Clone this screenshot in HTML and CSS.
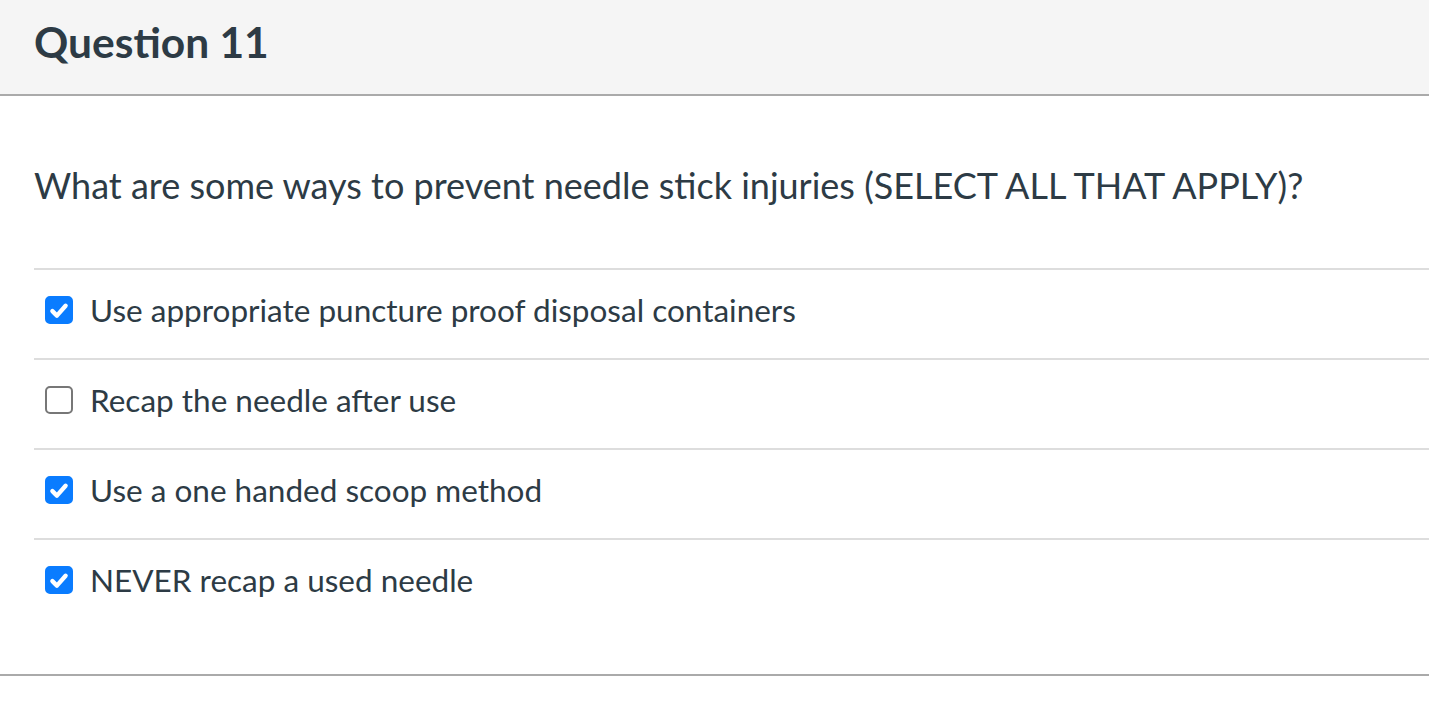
FILE: index.html
```html
<!DOCTYPE html>
<html lang="en">
<head>
  <meta charset="UTF-8" />
  <title>Question 11</title>
  <link rel="stylesheet" href="styles.css">
</head>
<body>
  <div class="question">
    <div class="question-header">
      <h2>Question 11</h2>
    </div>
    <div class="question-body">
      <p class="question-text">What are some ways to prevent needle stick injuries (SELECT ALL THAT APPLY)?</p>
      <div class="answers">
        <label class="answer">
          <span class="box checked"><svg viewBox="0 0 16 16"><path d="M3.6 8.4 L6.6 11.4 L12.4 4.8" /></svg></span>
          Use appropriate puncture proof disposal containers
        </label>
        <label class="answer">
          <span class="box"></span>
          Recap the needle after use
        </label>
        <label class="answer">
          <span class="box checked"><svg viewBox="0 0 16 16"><path d="M3.6 8.4 L6.6 11.4 L12.4 4.8" /></svg></span>
          Use a one handed scoop method
        </label>
        <label class="answer">
          <span class="box checked"><svg viewBox="0 0 16 16"><path d="M3.6 8.4 L6.6 11.4 L12.4 4.8" /></svg></span>
          NEVER recap a used needle
        </label>
      </div>
    </div>
  </div>
</body>
</html>
```

FILE: styles.css
```css
* {
  box-sizing: border-box;
}

body {
  margin: 0;
  background: #fff;
  font-family: Lato, "Open Sans", sans-serif;
  color: #2d3b45;
}

.question {
  border-bottom: 2px solid #aaa;
}

.question-header {
  background: #f5f5f5;
  border-bottom: 2px solid #aaa;
  height: 96px;
  padding: 0 34px;
  display: flex;
  align-items: center;
}

.question-header h2 {
  margin: 0 0 12px;
  font-size: 42.5px;
  font-weight: 700;
  color: #2d3b45;
}

.question-body {
  padding: 68px 0 46px 34px;
}

.question-text {
  margin: 0 0 62px;
  font-size: 36px;
  line-height: 42px;
}

.answer {
  display: flex;
  align-items: center;
  gap: 17px;
  height: 90px;
  padding-left: 11px;
  padding-bottom: 8px;
  border-top: 2px solid #ddd;
  font-size: 31.5px;
}

.box {
  width: 28px;
  height: 28px;
  border: 2px solid #777;
  border-radius: 5px;
  flex: none;
  display: flex;
  align-items: center;
  justify-content: center;
}

.box.checked {
  background: #0a7cff;
  border-color: #0a7cff;
}

.box svg {
  width: 25px;
  height: 25px;
  fill: none;
  stroke: #fff;
  stroke-width: 2.9;
  stroke-linecap: round;
  stroke-linejoin: round;
}
```
